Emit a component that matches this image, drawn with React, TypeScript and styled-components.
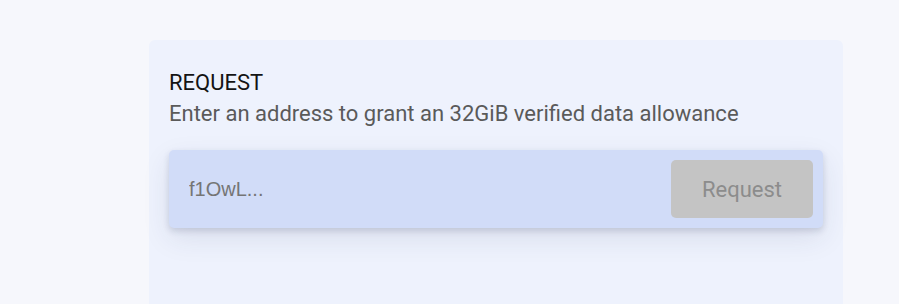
import React, { useState } from 'react';
import styled, { createGlobalStyle } from 'styled-components';

const GlobalStyle = createGlobalStyle`
  html, body {
    margin: 0;
    padding: 0;
    background: #f6f7fc;
    font-family: 'Roboto', 'Liberation Sans', sans-serif;
  }
`;

const Page = styled.div`
  padding: 40px 56px 0 149px;
  height: 304px;
  box-sizing: border-box;
  overflow: hidden;
`;

const Card = styled.section`
  width: 694px;
  height: 300px;
  box-sizing: border-box;
  padding: 27px 20px 0 20px;
  background: #eef2fd;
  border-radius: 6px;
`;

const Title = styled.h2`
  margin: 0;
  font-size: 22px;
  font-weight: 400;
  line-height: 31px;
  color: #141414;
  text-transform: uppercase;
`;

const Subtitle = styled.p`
  margin: 0;
  font-size: 22px;
  line-height: 31px;
  color: #5a5a5a;
`;

const InputRow = styled.div`
  margin-top: 21px;
  display: flex;
  align-items: center;
  height: 78px;
  box-sizing: border-box;
  padding: 0 10px 0 20px;
  background: #d1dcf8;
  border-radius: 5px;
  box-shadow: 0 3px 6px rgba(40, 50, 90, 0.16), 0 10px 28px rgba(40, 50, 90, 0.1);
`;

const AddressInput = styled.input`
  flex: 1;
  min-width: 0;
  padding: 0;
  border: 0;
  outline: none;
  background: transparent;
  font-family: 'Liberation Sans', Arial, sans-serif;
  font-size: 20px;
  color: #707070;
  ::placeholder {
    color: #707070;
  }
`;

const RequestButton = styled.button<{ $active: boolean }>`
  width: 142px;
  height: 58px;
  border: 0;
  border-radius: 5px;
  background: ${(p) => (p.$active ? '#4b6bdc' : '#c4c4c4')};
  color: ${(p) => (p.$active ? '#fff' : '#8c8c8c')};
  font-family: 'Roboto', 'Liberation Sans', sans-serif;
  font-size: 22px;
  cursor: ${(p) => (p.$active ? 'pointer' : 'default')};
`;

const App: React.FC = () => {
  const [address, setAddress] = useState('');

  return (
    <>
      <GlobalStyle />
      <Page>
        <Card>
          <Title>Request</Title>
          <Subtitle>
            Enter an address to grant an 32GiB verified data allowance
          </Subtitle>
          <InputRow>
            <AddressInput
              type="text"
              placeholder="f1OwL..."
              value={address}
              onChange={(e) => setAddress(e.target.value)}
            />
            <RequestButton $active={address.length > 0} disabled={!address}>
              Request
            </RequestButton>
          </InputRow>
        </Card>
      </Page>
    </>
  );
};

export default App;
